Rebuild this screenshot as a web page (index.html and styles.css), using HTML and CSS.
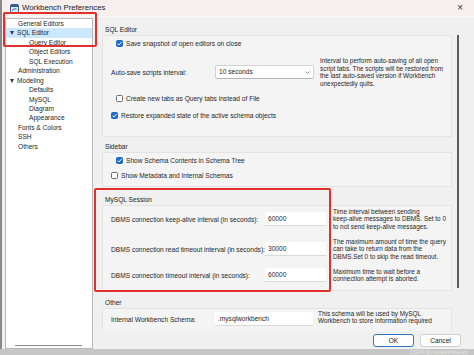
FILE: index.html
```html
<!DOCTYPE html>
<html>
<head>
<meta charset="utf-8">
<link rel="stylesheet" href="styles.css">
</head>
<body>
<div class="win">
  <div class="titlebar">
    <svg class="appicon" width="9" height="9" viewBox="0 0 9 9"><rect x="0.5" y="0.5" width="8" height="8" rx="1" fill="#dfe8f2" stroke="#2f5f93"/><rect x="1" y="1" width="7" height="2" fill="#2f5f93"/><path d="M2 6.5 Q4 4 6.5 5" stroke="#2f5f93" stroke-width="1" fill="none"/></svg>
    <span class="title">Workbench Preferences</span>
    <span class="close">×</span>
  </div>
  <div class="main">
    <div class="tree">
      <div class="node l1">General Editors</div>
      <div class="node l1 sel"><span class="tw"></span>SQL Editor</div>
      <div class="node l2">Query Editor</div>
      <div class="node l2">Object Editors</div>
      <div class="node l2">SQL Execution</div>
      <div class="node l1">Administration</div>
      <div class="node l1"><span class="tw"></span>Modeling</div>
      <div class="node l2">Defaults</div>
      <div class="node l2">MySQL</div>
      <div class="node l2">Diagram</div>
      <div class="node l2">Appearance</div>
      <div class="node l1">Fonts &amp; Colors</div>
      <div class="node l1">SSH</div>
      <div class="node l1">Others</div>
      <div class="hscroll"></div>
    </div>
    <div class="right">
      <div class="pane">
        <div class="sections">
          <div class="sec-label">SQL Editor</div>
          <div class="box box1">
            <div class="chk-row ind2 r1"><span class="cb on"><svg viewBox="0 0 7 7"><path d="M1.5 3.6 L2.9 5 L5.6 2" stroke="#fff" stroke-width="1" fill="none"/></svg></span>Save snapshot of open editors on close</div>
            <div class="field-row autosave">
              <span class="flabel w104">Auto-save scripts interval:</span>
              <div class="select">10 seconds<svg class="chev" width="5" height="3" viewBox="0 0 5 3"><path d="M0.5 0.5 L2.5 2.5 L4.5 0.5" stroke="#777" stroke-width="0.8" fill="none"/></svg></div>
              <div class="desc d6">Interval to perform auto-saving of all open<br>script tabs. The scripts will be restored from<br>the last auto-saved version if Workbench<br>unexpectedly quits.</div>
            </div>
            <div class="chk-row ind2 r3"><span class="cb"></span>Create new tabs as Query tabs instead of File</div>
            <div class="chk-row ind1 r4"><span class="cb on"><svg viewBox="0 0 7 7"><path d="M1.5 3.6 L2.9 5 L5.6 2" stroke="#fff" stroke-width="1" fill="none"/></svg></span>Restore expanded state of the active schema objects</div>
          </div>

          <div class="sec-label s2">Sidebar</div>
          <div class="box box2">
            <div class="chk-row ind2 ra"><span class="cb on"><svg viewBox="0 0 7 7"><path d="M1.5 3.6 L2.9 5 L5.6 2" stroke="#fff" stroke-width="1" fill="none"/></svg></span>Show Schema Contents in Schema Tree</div>
            <div class="chk-row ind1 rb"><span class="cb"></span>Show Metadata and Internal Schemas</div>
          </div>

          <div class="sec-label s3">MySQL Session</div>
          <div class="box box3">
            <div class="field-row m1">
              <span class="flabel w154">DBMS connection keep-alive interval (in seconds):</span>
              <div class="input w61">60000</div>
              <div class="desc d7">Time interval between sending<br>keep-alive messages to DBMS. Set to 0<br>to not send keep-alive messages.</div>
            </div>
            <div class="field-row m2">
              <span class="flabel w154">DBMS connection read timeout interval (in seconds):</span>
              <div class="input w61">30000</div>
              <div class="desc d7">The maximum amount of time the query<br>can take to return data from the<br>DBMS.Set 0 to skip the read timeout.</div>
            </div>
            <div class="field-row m3">
              <span class="flabel w154">DBMS connection timeout interval (in seconds):</span>
              <div class="input w61">60000</div>
              <div class="desc d7">Maximum time to wait before a<br>connection attempt is aborted.</div>
            </div>
          </div>

          <div class="sec-label s4">Other</div>
          <div class="box box4">
            <div class="field-row o1">
              <span class="flabel w104">Internal Workbench Schema:</span>
              <div class="input w98">.mysqlworkbench</div>
              <div class="desc d7">This schema will be used by MySQL<br>Workbench to store information required</div>
            </div>
          </div>
        </div>
        <div class="vscroll"><div class="thumb"></div></div>
      </div>
      <div class="buttons">
        <div class="btn default">OK</div>
        <div class="btn">Cancel</div>
      </div>
    </div>
  </div>
</div>
<div class="strip"><span class="wm">CSDN @mysqlworkbench</span></div>
<div class="annot a1"></div>
<div class="annot a2"></div>
</body>
</html>
```
FILE: styles.css
```css
* { box-sizing: border-box; margin: 0; padding: 0; }
html, body { width: 474px; height: 355px; overflow: hidden; }
body {
  background: #c6c6c6;
  font-family: "Liberation Sans", Arial, sans-serif;
  font-size: 6.6px;
  color: #262626;
  position: relative;
}
.win {
  height: 349px;
  background: #f0f0f0;
  display: flex;
  flex-direction: column;
  border-left: 2px solid #8a8a8a;
}
.titlebar {
  height: 17px;
  flex: none;
  background: #f7eeee;
  display: flex;
  align-items: center;
  padding-left: 8px;
  border-bottom: 1px solid #fbf7f7;
}
.appicon { display: block; }
.title { font-size: 7.8px; margin-left: 3px; color: #222; margin-top: -2px; }
.close { margin-left: auto; margin-right: 11px; font-size: 10px; color: #333; line-height: 10px; }

.main { flex: 1; display: flex; min-height: 0; }
.tree {
  width: 88px;
  margin-left: 3px;
  margin-top: 1px;
  background: #fff;
  border: 1px solid #b9b9b9;
  display: flex;
  flex-direction: column;
}
.node { height: 9.45px; line-height: 9.45px; white-space: nowrap; }
.l1 { padding-left: 12px; }
.l2 { padding-left: 23px; }
.sel { background: #cce8ff; }
.tw {
  display: inline-block;
  width: 0; height: 0;
  border-left: 2.5px solid transparent;
  border-right: 2.5px solid transparent;
  border-top: 4px solid #2a3b52;
  margin-left: -8px;
  margin-right: 3px;
  vertical-align: 0px;
}
.hscroll {
  margin-top: auto;
  height: 1px;
  background: #8c8c8c;
  margin-left: 9px;
  margin-right: 10px;
  margin-bottom: 2px;
}

.right { flex: 1; display: flex; flex-direction: column; min-width: 0; }
.pane { height: 314px; overflow: hidden; display: flex; flex: none; }
.sections { width: 350px; margin-left: 9px; padding-top: 7px; }
.sec-label { height: 11px; line-height: 11px; padding-left: 3px; color: #222; }
.s2 { margin-top: 4px; }
.s3 { margin-top: 7px; }
.s4 { margin-top: 6px; }
.box {
  background: #f4f4f4;
  border: 1px solid #e3e3e3;
}
.box1 { height: 102px; padding-top: 3px; }
.box2 { height: 35px; padding-top: 3px; }
.box3 { height: 86px; padding-top: 1px; }
.box4 { height: 40px; padding-top: 2px; }

.chk-row { display: flex; align-items: center; height: 8px; white-space: nowrap; }
.ind2 { padding-left: 13px; }
.ind1 { padding-left: 8px; }
.r3 { margin-top: 7px; }
.r4 { margin-top: 9px; }
.rb { margin-top: 7px; }
.cb {
  width: 7px; height: 7px;
  border: 1px solid #6e6e6e;
  border-radius: 1.5px;
  background: #fff;
  margin-right: 3px;
  flex: none;
  display: flex;
}
.cb.on { background: #1c6dc7; border-color: #1c6dc7; }
.cb svg { width: 7px; height: 7px; margin: -1px; }

.field-row { display: flex; align-items: center; padding-left: 8px; white-space: nowrap; }
.autosave { margin-top: 10px; height: 30px; }
.m1 { height: 24px; }
.m2 { height: 24px; margin-top: 6px; }
.m3 { height: 16px; margin-top: 6px; }
.o1 { height: 16px; }
.flabel { flex: none; }
.w104 { width: 104px; }
.w154 { width: 154px; }
.select {
  width: 99px; height: 14px;
  background: #fff;
  border: 1px solid #d2d2d2;
  border-bottom-color: #b5b5b5;
  border-radius: 2px;
  padding-left: 3px;
  line-height: 12px;
  display: flex;
  align-items: center;
  flex: none;
}
.chev { margin-left: auto; margin-right: 3px; }
.input {
  height: 14px;
  background: #fff;
  border-bottom: 1px solid #d9d9d9;
  padding-left: 3px;
  line-height: 14px;
  flex: none;
}
.w61 { width: 61px; }
.w98 { width: 98px; }
.desc { line-height: 7.5px; font-size: 6.4px; color: #262626; }
.d6 { margin-left: 6px; }
.d7 { margin-left: 7px; }
.o1 .desc { margin-left: 5px; margin-top: -4px; }

.vscroll { width: 11px; flex: none; padding-top: 18px; padding-left: 5px; }
.thumb { width: 1.5px; height: 253px; background: #5c5c5c; }

.buttons {
  flex: 1;
  display: flex;
  justify-content: flex-end;
  align-items: center;
  gap: 6px;
  padding-right: 13px;
}
.btn {
  width: 41px; height: 13px;
  background: #fdfdfd;
  border: 1px solid #d0d0d0;
  border-radius: 3px;
  text-align: center;
  line-height: 11px;
  color: #222;
}
.btn.default { border-color: #2a78c8; }

.strip { height: 6px; display: flex; justify-content: flex-end; padding-right: 6px; }
.wm { font-size: 5px; line-height: 6px; color: #e4e4e4; }

.annot { position: absolute; border: 2px solid #e0302c; border-radius: 2px; }
.a1 { left: 3px; top: 12px; width: 94px; height: 35px; }
.a2 { left: 94px; top: 188px; width: 237px; height: 104px; }
```
